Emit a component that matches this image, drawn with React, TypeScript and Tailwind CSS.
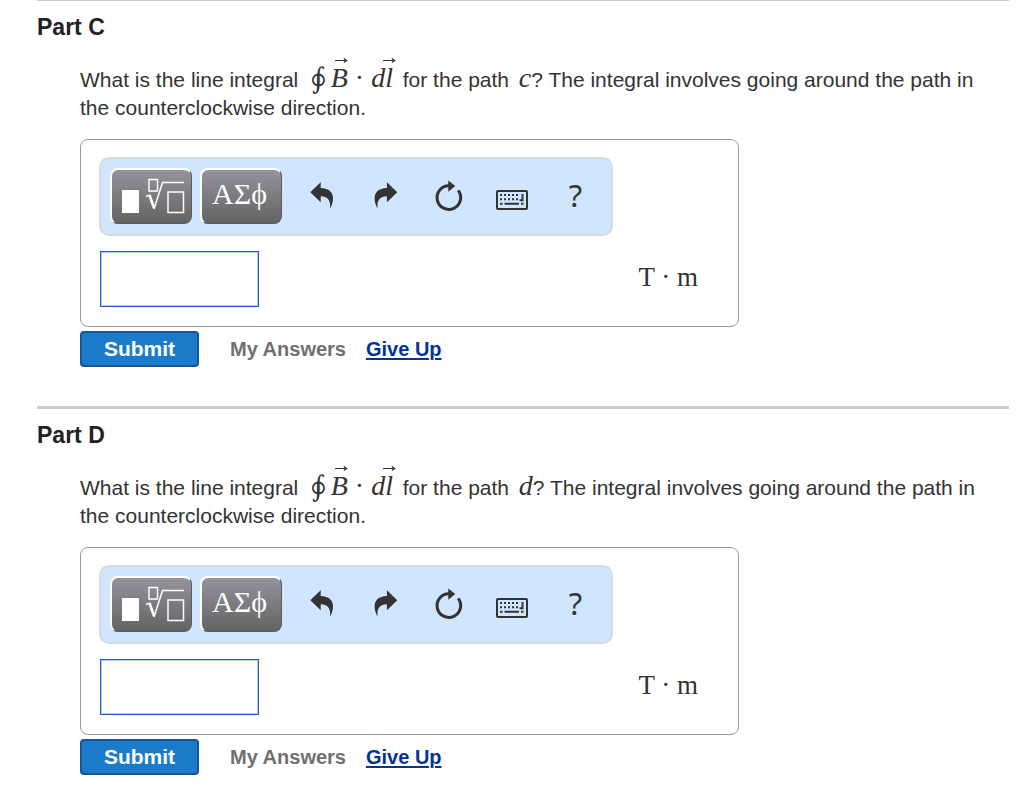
import type { ReactNode } from "react"

const PARTS = [
    { id: "c", title: "Part C", path: "c" },
    { id: "d", title: "Part D", path: "d" },
]

function Vector({ letter, arrowClass }: { letter: string; arrowClass: string }) {
    return (
        <span className="relative">
            {letter}
            <svg className={`absolute -top-1 ${arrowClass}`} width="13" height="6" viewBox="0 0 13 6" fill="none" stroke="#333" strokeWidth="1.2">
                <path d="M0 2.5H12M9 .2C9.6 1.6 10.8 2.3 12.3 2.5C10.8 2.7 9.6 3.4 9 4.8" />
            </svg>
        </span>
    )
}

function LineIntegral() {
    return (
        <span className="inline-flex items-baseline ml-1.5 mr-1 font-['Liberation_Serif',serif] text-[28px] leading-5">
            <span className="mr-1 font-['DejaVu_Math_TeX_Gyre','DejaVu_Serif',serif] text-[25px] leading-5">∮</span>
            <i><Vector letter="B" arrowClass="left-1" /></i>
            <span className="mx-[7px]">·</span>
            <i>d</i>
            <i><Vector letter="l" arrowClass="-left-0.5" /></i>
        </span>
    )
}

function PaletteButton({ label, children }: { label: string; children: ReactNode }) {
    return (
        <button
            type="button"
            aria-label={label}
            className="flex items-center justify-center w-[82px] h-14 rounded-lg border-t-2 border-l-2 border-r border-b border-t-white border-l-white border-r-[#5c5b5f] border-b-[#5c5b5f] bg-linear-to-b from-[#96939d] to-[#636363] text-white"
        >
            {children}
        </button>
    )
}

function ToolButton({ label, children }: { label: string; children: ReactNode }) {
    return (
        <button type="button" aria-label={label} className="flex items-center justify-center w-[63px] h-14 text-[#333]">
            {children}
        </button>
    )
}

function Icon({ children }: { children: ReactNode }) {
    return (
        <svg className="overflow-visible" width="33" height="33" viewBox="0 0 33 33" fill="currentColor">
            {children}
        </svg>
    )
}

function Toolbar() {
    return (
        <div className="flex w-fit items-center rounded-[10px] border-2 border-[#dadbdc] bg-[#d0e5fe] pt-[9px] pb-2.5 pl-[9px] pr-[6px]">
            <div className="flex gap-2 mr-2">
                <PaletteButton label="Templates">
                    <svg width="78" height="52" viewBox="3 3 78 52" fill="none" stroke="white">
                        <path d="M12 22h17v23H12z" fill="white" stroke="none" />
                        <path d="M39 11.5h8.5v11.5h-8.5z" strokeWidth="1.4" />
                        <path d="M36 28.5L39.5 27" strokeWidth="1.4" />
                        <path d="M39.5 27L44 40" strokeWidth="2.6" />
                        <path d="M44 41L52.5 14.5H74" strokeWidth="1.5" />
                        <path d="M58 24h15.5v20.5H58z" strokeWidth="1.5" />
                    </svg>
                </PaletteButton>
                <PaletteButton label="Symbols">
                    <span className="pr-1 pb-1.5 font-['Liberation_Serif','DejaVu_Serif',serif] text-[30px] leading-8">ΑΣϕ</span>
                </PaletteButton>
            </div>
            <ToolButton label="Undo">
                <Icon>
                    <path d="M5.3 12.3L15.7 2.3V8C24 8.3 28 12.5 28 18.5C28 22.5 26.5 26 25 28.7C25.8 22 24 16.5 15.7 16.3V22.3Z" />
                </Icon>
            </ToolButton>
            <ToolButton label="Redo">
                <Icon>
                    <path d="M29.3 12.3L18.9 2.3V8C10.6 8.3 6.6 12.5 6.6 18.5C6.6 22.5 8.1 26 9.6 28.7C8.8 22 10.6 16.5 18.9 16.3V22.3Z" />
                </Icon>
            </ToolButton>
            <ToolButton label="Reset">
                <Icon>
                    <path d="M27.2 10.4A11.8 11.8 0 1 1 18 5.8" fill="none" stroke="currentColor" strokeWidth="3" />
                    <path d="M17.3 .5L24.2 6L17.3 11.7Z" />
                </Icon>
            </ToolButton>
            <ToolButton label="Keyboard shortcuts">
                <Icon>
                    <rect x="3" y="11" width="30" height="18" rx="1" fill="none" stroke="currentColor" strokeWidth="2" />
                    <path d="M6 15H26M6 19.3H26" fill="none" stroke="currentColor" strokeWidth="2" strokeDasharray="2 2" />
                    <path d="M6 23.7h2.5M10.5 23.7h14.5M27 23.7h2.5M28.5 14V20.3H25.5" fill="none" stroke="currentColor" strokeWidth="2" />
                </Icon>
            </ToolButton>
            <ToolButton label="Help">
                <span className="pl-1 pb-0.5 font-['Noto_Sans',sans-serif] text-[31px] leading-8">?</span>
            </ToolButton>
        </div>
    )
}

function Part({ id, title, path }: { id: string; title: string; path: string }) {
    return (
        <section className="border-t-3 border-[#ccc] pt-3 pb-[39px]">
            <h2 className="text-[23px] leading-7 font-bold text-[#222]">{title}</h2>
            <div className="pl-[43px]">
                <p className="mt-[25px] pr-4 text-[21px] leading-7">
                    What is the line integral <LineIntegral /> for the path{" "}
                    <i className="ml-1 font-['Liberation_Serif',serif] text-[28px] leading-5">{path}</i>? The integral involves going around the path in the counterclockwise direction.
                </p>
                <div className="mt-[17px] max-w-[659px] rounded-lg border border-[#999] px-[18px] pt-[17px] pb-[19px]">
                    <Toolbar />
                    <div className="mt-[15px] ml-px mr-[22px] flex items-center justify-between">
                        <input
                            id={`answer-${id}`}
                            type="text"
                            aria-label={`${title} answer`}
                            className="w-[159px] h-14 border border-[#2459c9] px-2 shadow-[inset_0_0_0_1px_#b9caef] outline-none"
                        />
                        <label htmlFor={`answer-${id}`} className="pb-1 font-['Liberation_Serif',serif] text-[27px] leading-8">T · m</label>
                    </div>
                </div>
                <div className="mt-1 flex items-center text-xl leading-6 font-bold">
                    <button type="button" className="mr-[31px] w-[119px] h-9 rounded border-2 border-[#14588f] bg-[#1c7bc9] text-[21px] text-white">
                        Submit
                    </button>
                    <button type="button" className="mr-5 text-[#707070]">My Answers</button>
                    <a href="#" className="text-[#003399] underline decoration-2 underline-offset-2">Give Up</a>
                </div>
            </div>
        </section>
    )
}

export default function App() {
    return (
        <main className="-mt-0.5 bg-white pl-[37px] pr-[15px] font-['Liberation_Sans',Arial,sans-serif] text-[#333]">
            {PARTS.map(part => (
                <Part key={part.id} {...part} />
            ))}
        </main>
    )
}
